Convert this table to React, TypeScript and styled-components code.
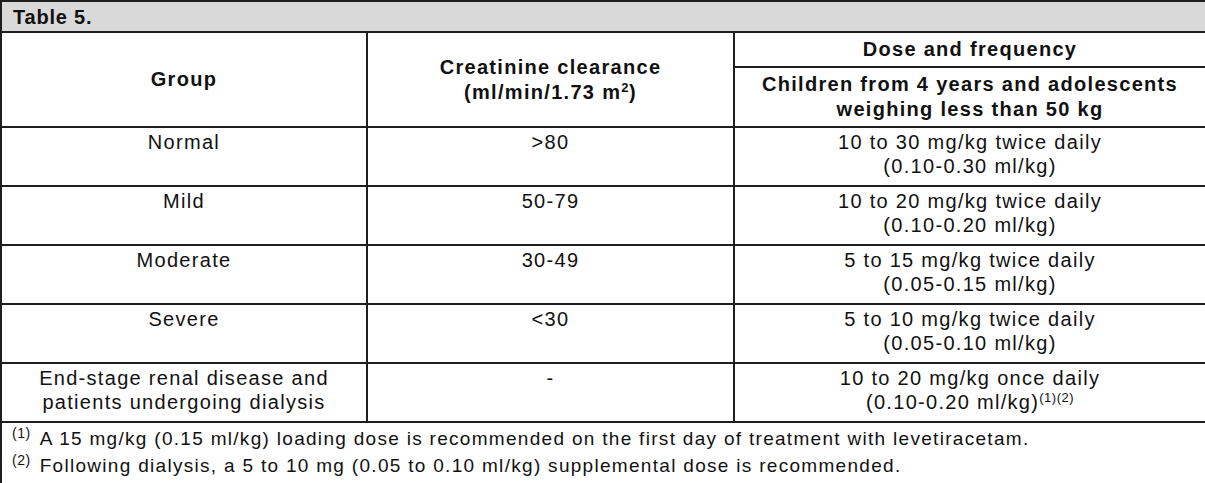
import React from "react";
import styled, { createGlobalStyle } from "styled-components";

const Global = createGlobalStyle`
  html, body { margin: 0; padding: 0; background: #ffffff; }
  body { font-family: "Liberation Sans", Arial, sans-serif; color: #111; }
`;

const Table = styled.table`
  width: 1205px;
  border-collapse: collapse;
  table-layout: fixed;
  font-family: "Liberation Sans", Arial, sans-serif;
  font-size: 20px;
  line-height: 24px;
  letter-spacing: 1.3px;
  color: #111;
`;

const border = "2px solid #1e1e1e";

const TitleCell = styled.th`
  background: #d9d9d9;
  border: ${border};
  text-align: left;
  font-weight: bold;
  font-size: 20px;
  letter-spacing: 0.8px;
  line-height: 22px;
  height: 31px;
  padding: 0 0 0 11px;
  box-sizing: border-box;
`;

const HeadCell = styled.th<{ $h?: number }>`
  border: ${border};
  font-weight: bold;
  text-align: center;
  vertical-align: middle;
  padding: 2px 4px;
  line-height: 25px;
  ${(p) => (p.$h ? `height: ${p.$h}px;` : "")}
`;

const Cell = styled.td`
  border: ${border};
  text-align: center;
  vertical-align: top;
  padding: 2px 4px 7px;
  height: 48px;
`;

const NoteCell = styled.td`
  border: ${border};
  text-align: left;
  font-size: 19px;
  padding: 2px 10px 4px 10px;
  line-height: 27px;
`;

const Sup = styled.sup`
  font-size: 13px;
  line-height: 0;
  letter-spacing: 0.5px;
  vertical-align: 7px;
`;

const NoteSup = styled(Sup)`
  font-size: 14px;
  margin-right: 9px;
`;

type Row = { group: string[]; cc: string; dose: [string, React.ReactNode] };

const rows: Row[] = [
  { group: ["Normal"], cc: ">80", dose: ["10 to 30 mg/kg twice daily", "(0.10-0.30 ml/kg)"] },
  { group: ["Mild"], cc: "50-79", dose: ["10 to 20 mg/kg twice daily", "(0.10-0.20 ml/kg)"] },
  { group: ["Moderate"], cc: "30-49", dose: ["5 to 15 mg/kg twice daily", "(0.05-0.15 ml/kg)"] },
  { group: ["Severe"], cc: "<30", dose: ["5 to 10 mg/kg twice daily", "(0.05-0.10 ml/kg)"] },
  {
    group: ["End-stage renal disease and", "patients undergoing dialysis"],
    cc: "-",
    dose: [
      "10 to 20 mg/kg once daily",
      <>
        (0.10-0.20 ml/kg)<Sup>(1)(2)</Sup>
      </>,
    ],
  },
];

export default function App() {
  return (
    <>
      <Global />
      <Table>
        <colgroup>
          <col style={{ width: 366 }} />
          <col style={{ width: 367 }} />
          <col style={{ width: 472 }} />
        </colgroup>
        <thead>
          <tr>
            <TitleCell colSpan={3}>Table 5.</TitleCell>
          </tr>
          <tr>
            <HeadCell rowSpan={2}>Group</HeadCell>
            <HeadCell rowSpan={2}>
              Creatinine clearance
              <br />
              (ml/min/1.73 m<Sup>2</Sup>)
            </HeadCell>
            <HeadCell $h={29}>Dose and frequency</HeadCell>
          </tr>
          <tr>
            <HeadCell $h={54}>
              Children from 4 years and adolescents
              <br />
              weighing less than 50 kg
            </HeadCell>
          </tr>
        </thead>
        <tbody>
          {rows.map((r, i) => (
            <tr key={i}>
              <Cell>
                {r.group.map((g, j) => (
                  <React.Fragment key={j}>
                    {j > 0 && <br />}
                    {g}
                  </React.Fragment>
                ))}
              </Cell>
              <Cell>{r.cc}</Cell>
              <Cell>
                {r.dose[0]}
                <br />
                {r.dose[1]}
              </Cell>
            </tr>
          ))}
          <tr>
            <NoteCell colSpan={3}>
              <NoteSup>(1)</NoteSup>A 15 mg/kg (0.15 ml/kg) loading dose is recommended on the first day of treatment with levetiracetam.
              <br />
              <NoteSup>(2)</NoteSup>Following dialysis, a 5 to 10 mg (0.05 to 0.10 ml/kg) supplemental dose is recommended.
            </NoteCell>
          </tr>
        </tbody>
      </Table>
    </>
  );
}
